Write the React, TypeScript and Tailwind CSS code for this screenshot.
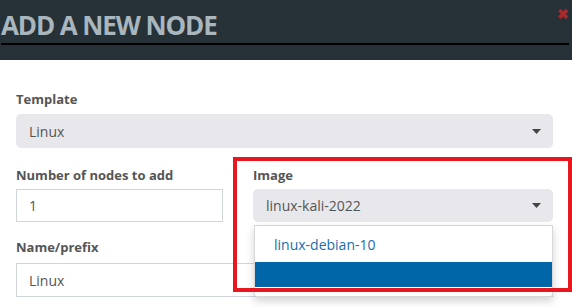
import React from "react";

const Caret = () => (
  <svg width="9" height="5" viewBox="0 0 9 5">
    <path d="M0 0 H9 L4.5 5 Z" fill="#444" />
  </svg>
);

const Label = ({ children, className = "" }: { children: React.ReactNode; className?: string }) => (
  <div className={`text-[13px] leading-[20px] font-bold text-[#555] ${className}`}>{children}</div>
);

export default function App() {
  return (
    <div
      className="relative w-[572px] h-[307px] overflow-hidden bg-white"
      style={{ fontFamily: '"Open Sans", "Noto Sans", sans-serif' }}
    >
      <div className="relative h-[60px] bg-[#263238] pl-[1px] pt-[11px]">
        <div className="w-[568px] border-b-2 border-black pb-[4px]">
          <span className="block text-[26px] leading-[28px] font-bold text-[#a9b6be] tracking-[-1.1px]">
            ADD A NEW NODE
          </span>
        </div>
        <span className="absolute right-[3px] top-[7px] text-[14px] font-bold text-[#a8282b] leading-none">✖</span>
      </div>

      <div className="flex flex-col px-4 pt-[29px]">
        <Label className="mb-[5px]">Template</Label>
        <div className="w-[537px] h-[34px] rounded-[5px] bg-[#e8e8ec] flex items-center justify-between pl-[13px] pr-[12px] text-[14px] text-[#555]">
          <span>Linux</span>
          <Caret />
        </div>

        <div className="flex gap-[30px] mt-[17px]">
          <div className="flex flex-col w-[207px]">
            <Label className="mb-[4px]">Number of nodes to add</Label>
            <div className="h-[33px] border border-[#d0d4db] flex items-center pl-[12px] text-[14px] text-[#555]">1</div>
          </div>
          <div className="flex flex-col w-[300px]">
            <Label className="mb-[4px]">Image</Label>
            <div className="h-[33px] rounded-[5px] bg-[#e8e8ec] flex items-center justify-between pl-[13px] pr-[12px] text-[14px] text-[#555]">
              <span>linux-kali-2022</span>
              <Caret />
            </div>
          </div>
        </div>

        <Label className="mt-[15px] mb-[6px]">Name/prefix</Label>
        <div className="w-[537px] h-[34px] border border-[#d0d4db] flex items-center pl-[12px] text-[14px] text-[#555]">Linux</div>
      </div>

      <div className="absolute left-[254px] top-[225px] w-[299px] h-[72px] bg-white border border-[#d8d8d8] rounded-b-[3px] shadow-[0_4px_8px_rgba(0,0,0,0.18)]">
        <div className="h-[36px] flex items-center pl-[19px] text-[14px] text-[#1b6cab]">linux-debian-10</div>
        <div className="h-[25px] bg-[#0066a8]" />
      </div>

      <div className="absolute left-[233px] top-[157px] w-[339px] h-[135px] border-[4px] border-[#e8161e]" />
    </div>
  );
}
